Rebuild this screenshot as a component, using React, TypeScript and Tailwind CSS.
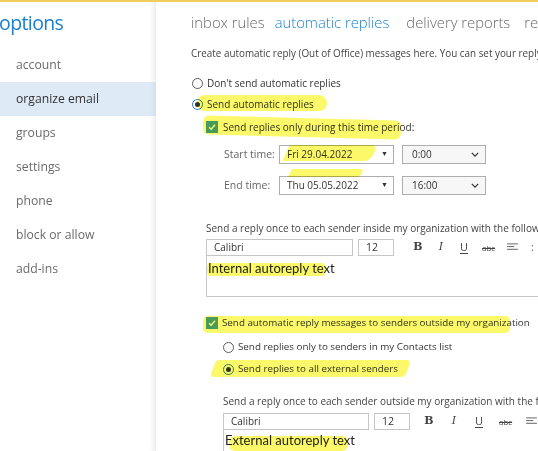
import React from 'react';

const navItems = [
  'account',
  'organize email',
  'groups',
  'settings',
  'phone',
  'block or allow',
  'add-ins',
];

const Radio = ({ checked }: { checked?: boolean }) => (
  <span
    className={`flex items-center justify-center w-[11px] h-[11px] rounded-full border-[1.5px] shrink-0 ${
      checked ? 'border-[#2b7fd0]' : 'border-[#5a5a5a]'
    }`}
  >
    {checked && <span className="w-[5px] h-[5px] rounded-full bg-[#333]" />}
  </span>
);

const Checkbox = () => (
  <span className="flex items-center justify-center w-[12px] h-[12px] bg-[#4a9fdc] shrink-0">
    <svg viewBox="0 0 12 12" className="w-[10px] h-[10px]">
      <path d="M2.5 6.2 L5 8.6 L9.6 3.4" fill="none" stroke="white" strokeWidth="1.7" />
    </svg>
  </span>
);

const Toolbar = ({ fontW, sizeW, gap }: { fontW: string; sizeW: string; gap: string }) => (
  <div className="flex items-center h-[17px]">
    <div className={`${fontW} h-[17px] border border-[#c6c6c6] flex items-center pl-[7px] text-[10px] text-[#333]`}>
      Calibri
    </div>
    <div className={`${sizeW} ml-[5px] h-[17px] border border-[#c6c6c6] flex items-center pl-[7px] text-[10.5px] text-[#333]`}>
      12
    </div>
    <div className={`flex items-center ${gap} text-[#444]`}>
      <span className="w-[10px] text-center font-['DejaVu_Serif'] font-bold text-[11px]">B</span>
      <span className="w-[10px] text-center font-['DejaVu_Serif'] italic text-[11px]">I</span>
      <span className="w-[10px] text-center text-[11px] underline underline-offset-2">U</span>
      <span className="w-[12px] text-center text-[8px] line-through">abc</span>
      <svg viewBox="0 0 12 10" className="w-[11px] h-[9px]">
        <path d="M0 1h12M0 4h8M0 7h12" stroke="#555" strokeWidth="1" />
      </svg>
      <span className="text-[11px] text-[#666]">:</span>
    </div>
  </div>
);

const TimeRow = ({ label, date, time, top }: { label: string; date: string; time: string; top: string }) => (
  <div className={`${top} flex items-center h-[19px]`}>
    <span className="w-[73px] pl-[18px] text-[10.5px] text-[#666]">{label}</span>
    <div className="w-[115px] h-[19px] border border-[#adadad] flex items-center justify-between pl-[7px] pr-[5px]">
      <span>{date}</span>
      <span className="text-[7px] text-[#333]">▼</span>
    </div>
    <div className="ml-[8px] w-[84px] h-[19px] border border-[#adadad] bg-[#f7f7f7] flex items-center justify-between pl-[9px] pr-[6px]">
      <span>{time}</span>
      <svg viewBox="0 0 10 6" className="w-[8px] h-[5px]">
        <path d="M1 1 L5 5 L9 1" fill="none" stroke="#333" strokeWidth="1.5" />
      </svg>
    </div>
  </div>
);

// yellow marker strokes laid over the form
const marks = [
  'left-[197px] top-[95px] w-[130px] h-[16px] rounded-[8px]',
  'left-[203px] top-[118px] w-[198px] h-[19px] rounded-[6px] rotate-[1.5deg]',
  'left-[286px] top-[145px] w-[88px] h-[16px] rounded-r-[6px] -skew-x-[25deg]',
  'left-[290px] top-[169px] w-[72px] h-[8px] rounded-r-[6px] -skew-x-[30deg]',
  'left-[207px] top-[263px] w-[118px] h-[13px] rounded-[4px]',
  'left-[203px] top-[316px] w-[307px] h-[17px] rounded-[5px]',
  'left-[213px] top-[360px] w-[195px] h-[17px] rounded-[4px] -skew-x-[20deg]',
  'left-[229px] top-[436px] w-[119px] h-[15px] rounded-[6px]',
];

const App = () => {
  return (
    <div className="relative w-[538px] h-[451px] overflow-hidden bg-white font-['Open_Sans'] text-[#333] whitespace-nowrap">
      <div className="h-[2px] bg-[#f3cd5c]" />
      <div className="flex h-[449px]">
        <aside className="w-[156px] shrink-0 shadow-[inset_-6px_0_6px_-4px_rgba(0,0,0,0.09)]">
          <div className="pt-[6px] -ml-[1px] text-[19.5px] leading-[30px] text-[#1a7fd0] tracking-[-0.6px]">options</div>
          <ul className="mt-[10px]">
            {navItems.map(item => (
              <li
                key={item}
                className={`h-[34px] flex items-center pl-[16px] text-[12.2px] ${
                  item === 'organize email'
                    ? 'bg-[#dfeaf7] text-[#333] shadow-[inset_-6px_0_6px_-4px_rgba(0,0,0,0.06)]'
                    : 'text-[#6a6a6a]'
                }`}
              >
                {item}
              </li>
            ))}
          </ul>
        </aside>

        <main className="flex-1 pl-[35px] text-[10px]">
          <nav className="pt-[8px] flex text-[14.8px] leading-[24px] font-light text-[#6a6a6a]">
            <span>inbox rules</span>
            <span className="ml-[10px] text-[#1a7fd0]">automatic replies</span>
            <span className="ml-[17px]">delivery reports</span>
            <span className="ml-[14px]">retention policies</span>
          </nav>

          <p className="mt-[12px] leading-[14px] text-[9.9px] text-[#444]">
            Create automatic reply (Out of Office) messages here. You can set your reply to start at a specific time.
          </p>

          <label className="mt-[16px] h-[14px] flex items-center gap-[4px] ml-[1px]">
            <Radio />
            Don't send automatic replies
          </label>
          <label className="mt-[7px] h-[14px] flex items-center gap-[4px] ml-[1px]">
            <Radio checked />
            Send automatic replies
          </label>

          <div className="ml-[15px]">
            <label className="mt-[9px] h-[14px] flex items-center gap-[5px]">
              <Checkbox />
              Send replies only during this time period:
            </label>

            <TimeRow top="mt-[11px]" label="Start time:" date="Fri 29.04.2022" time="0:00" />
            <TimeRow top="mt-[12px]" label="End time:" date="Thu 05.05.2022" time="16:00" />

            <p className="mt-[26px] leading-[14px] text-[#444]">
              Send a reply once to each sender inside my organization with the following message:
            </p>
            <div className="mt-[4px]">
              <Toolbar fontW="w-[147px]" sizeW="w-[36px]" gap="ml-[19px] gap-[13px]" />
              <div className="h-[41px] border border-t-0 border-[#c6c6c6] pl-[1px] pt-[4px] leading-[16px] text-[13px] font-['Lato'] text-[#222]">
                Internal autoreply text
              </div>
            </div>

            <label className="mt-[19px] h-[14px] flex items-center gap-[4px] text-[9.8px]">
              <Checkbox />
              Send automatic reply messages to senders outside my organization
            </label>

            <div className="ml-[17px] text-[9.8px]">
              <label className="mt-[10px] h-[14px] flex items-center gap-[4px]">
                <Radio />
                Send replies only to senders in my Contacts list
              </label>
              <label className="mt-[8px] h-[14px] flex items-center gap-[4px]">
                <Radio checked />
                Send replies to all external senders
              </label>

              <p className="mt-[18px] leading-[14px] text-[10px] text-[#444]">
                Send a reply once to each sender outside my organization with the following message:
              </p>
              <div className="mt-[5px]">
                <Toolbar fontW="w-[146px]" sizeW="w-[36px]" gap="ml-[14px] gap-[15px]" />
                <div className="h-[41px] border border-t-0 border-[#c6c6c6] pl-[1px] pt-[2px] leading-[16px] text-[13px] font-['Lato'] text-[#222]">
                  External autoreply text
                </div>
              </div>
            </div>
          </div>
        </main>
      </div>

      {marks.map(m => (
        <span key={m} className={`absolute pointer-events-none mix-blend-multiply bg-[#fbf96a] ${m}`} />
      ))}
    </div>
  );
};

export default App;
